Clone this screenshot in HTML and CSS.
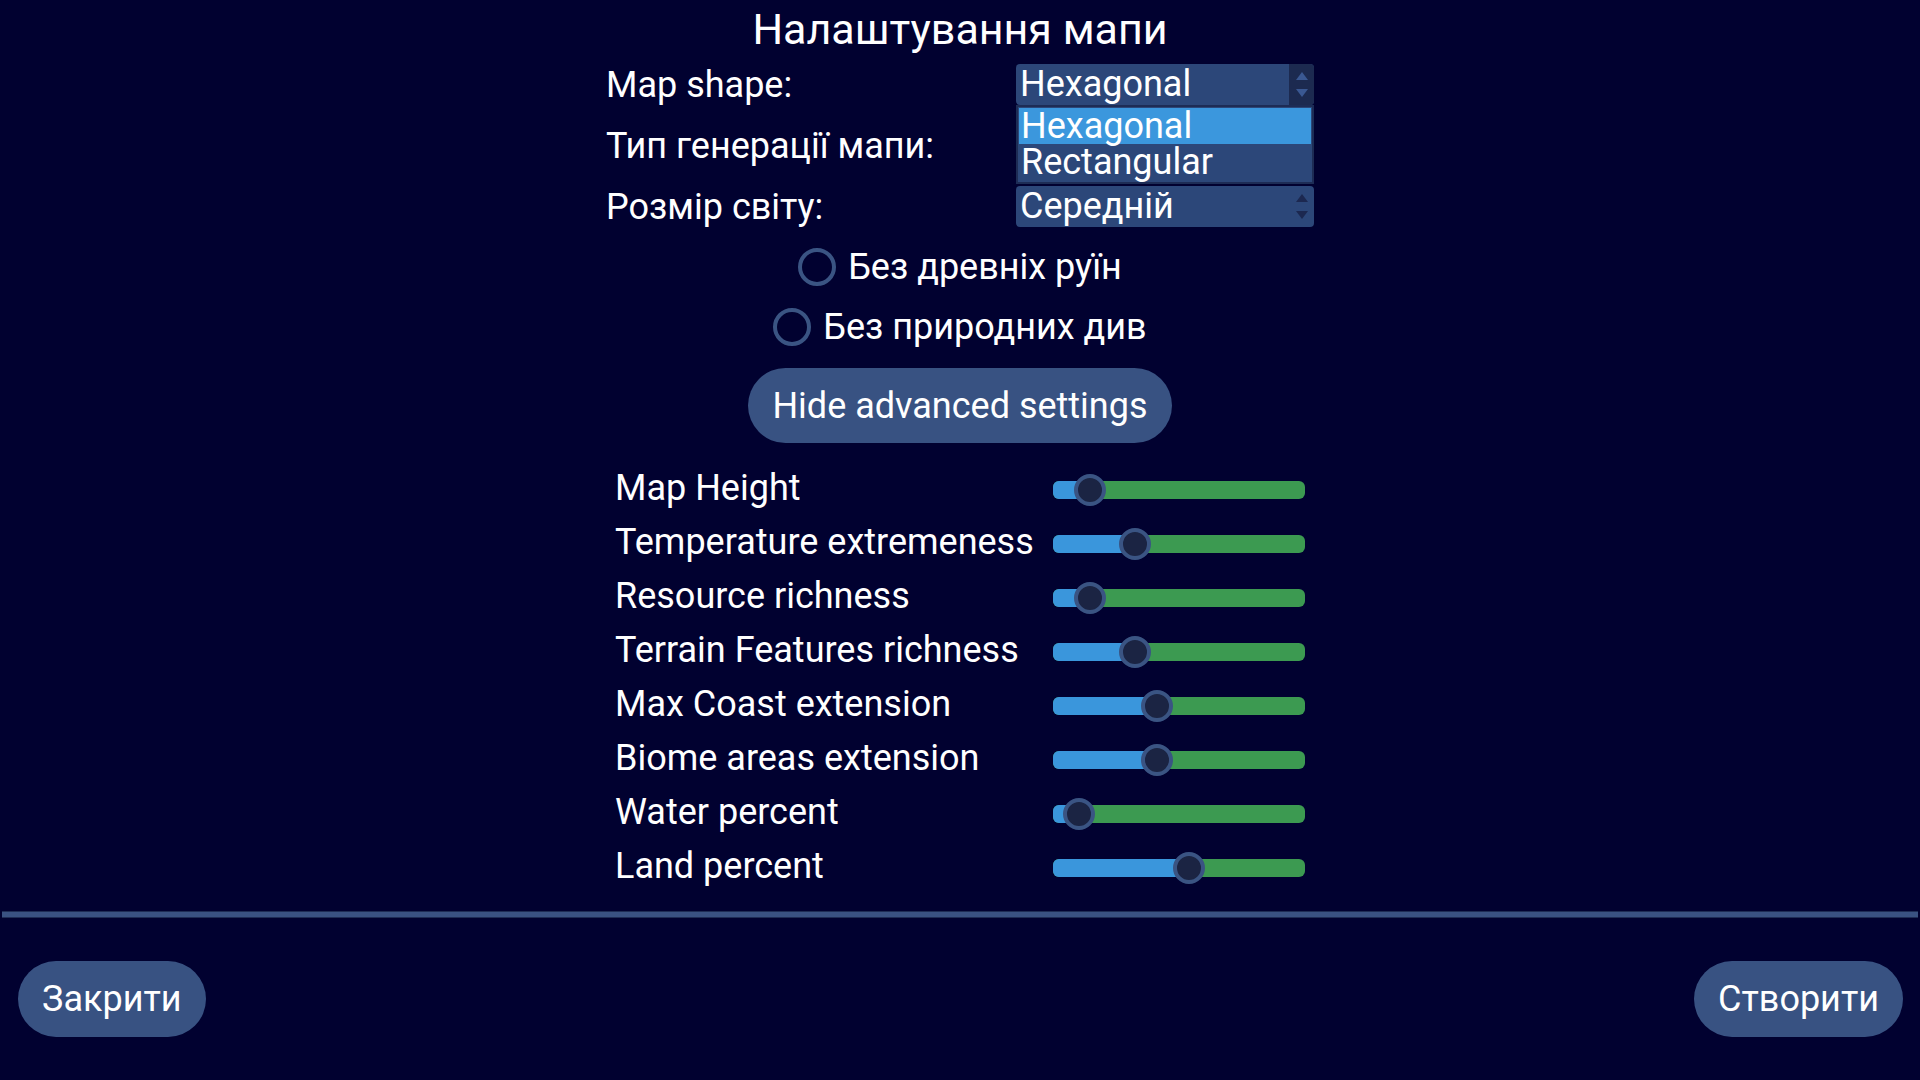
FILE: index.html
```html
<!DOCTYPE html>
<html lang="uk">
<head>
<meta charset="utf-8">
<title>Налаштування мапи</title>
<link rel="stylesheet" href="styles.css">
</head>
<body>
<div class="screen">
  <div class="main">
    <div class="title">Налаштування мапи</div>
    <div class="form">
      <div class="label">Map shape:</div>
      <div class="select open">
        <span class="value">Hexagonal</span>
        <span class="arrows dark"><i class="up"></i><i class="down"></i></span>
        <div class="dropdown">
          <div class="opt selected">Hexagonal</div>
          <div class="opt">Rectangular</div>
        </div>
      </div>
      <div class="label">Тип генерації мапи:</div>
      <div></div>
      <div class="label">Розмір світу:</div>
      <div class="select">
        <span class="value">Середній</span>
        <span class="arrows"><i class="up"></i><i class="down"></i></span>
      </div>
    </div>
    <div class="check"><span class="circle"></span><span>Без древніх руїн</span></div>
    <div class="check"><span class="circle"></span><span>Без природних див</span></div>
    <button class="btn adv">Hide advanced settings</button>
    <div class="sliders">
      <div class="slabel">Map Height</div>
      <div class="track" style="--p:37px"><span class="fill"></span><span class="knob"></span></div>
      <div class="slabel">Temperature extremeness</div>
      <div class="track" style="--p:82px"><span class="fill"></span><span class="knob"></span></div>
      <div class="slabel">Resource richness</div>
      <div class="track" style="--p:37px"><span class="fill"></span><span class="knob"></span></div>
      <div class="slabel">Terrain Features richness</div>
      <div class="track" style="--p:82px"><span class="fill"></span><span class="knob"></span></div>
      <div class="slabel">Max Coast extension</div>
      <div class="track" style="--p:104px"><span class="fill"></span><span class="knob"></span></div>
      <div class="slabel">Biome areas extension</div>
      <div class="track" style="--p:104px"><span class="fill"></span><span class="knob"></span></div>
      <div class="slabel">Water percent</div>
      <div class="track" style="--p:26px"><span class="fill"></span><span class="knob"></span></div>
      <div class="slabel">Land percent</div>
      <div class="track" style="--p:136px"><span class="fill"></span><span class="knob"></span></div>
    </div>
  </div>
  <div class="separator"></div>
  <div class="footer">
    <button class="btn">Закрити</button>
    <button class="btn">Створити</button>
  </div>
</div>
</body>
</html>
```
FILE: styles.css
```css
html, body {
  margin: 0;
  padding: 0;
  background: #010130;
  color: #ffffff;
  font-family: Roboto, "Noto Sans", "Liberation Sans", sans-serif;
}

.screen {
  width: 1920px;
  height: 1080px;
  display: flex;
  flex-direction: column;
  overflow: hidden;
}

.main {
  flex: 1;
  display: flex;
  flex-direction: column;
  align-items: center;
}

.title {
  font-size: 43px;
  line-height: 50px;
  padding-top: 4px;
}

.form {
  display: grid;
  grid-template-columns: 410px 298px;
  grid-auto-rows: 61px;
  align-items: center;
}

.label {
  font-size: 36px;
  line-height: 42px;
  white-space: nowrap;
}

.select {
  position: relative;
  height: 41px;
  background: #2c4779;
  border-radius: 4px;
  display: flex;
  align-items: center;
  font-size: 36px;
}

.select .value {
  flex: 1;
  padding-left: 4px;
  line-height: 41px;
}

.arrows {
  width: 25px;
  height: 100%;
  display: flex;
  flex-direction: column;
  align-items: center;
  justify-content: center;
  gap: 9px;
  border-radius: 0 4px 4px 0;
}

.arrows i {
  width: 0;
  height: 0;
  border-left: 6px solid transparent;
  border-right: 6px solid transparent;
}

.arrows i.up { border-bottom: 8px solid #1c2850; }
.arrows i.down { border-top: 8px solid #1c2850; }

.arrows.dark { background: #1c2a50; }
.arrows.dark i.up { border-bottom-color: #3a5892; }
.arrows.dark i.down { border-top-color: #3a5892; }

.dropdown {
  position: absolute;
  top: 41px;
  left: 0;
  width: 298px;
  height: 79px;
  box-sizing: border-box;
  background: #2c4779;
  border: 2px solid #1d2c55;
  padding: 1px 1px;
  z-index: 2;
}

.opt {
  height: 36px;
  line-height: 36px;
  padding-left: 2px;
  font-size: 36px;
}

.opt.selected {
  background: #3b97dd;
}

.check {
  height: 60px;
  display: flex;
  align-items: center;
  justify-content: center;
  gap: 12px;
  font-size: 36px;
}

.circle {
  width: 38px;
  height: 38px;
  box-sizing: border-box;
  border: 4px solid #3a5483;
  border-radius: 50%;
}

.btn {
  font-family: Roboto, "Noto Sans", "Liberation Sans", sans-serif;
  font-size: 36px;
  color: #ffffff;
  background: #385282;
  border: none;
  height: 76px;
  padding: 0 24px;
  border-radius: 38px;
  white-space: nowrap;
  cursor: pointer;
}

.adv {
  margin-top: 11px;
  height: 75px;
  min-width: 422px;
}

.sliders {
  margin-top: 18px;
  display: grid;
  grid-template-columns: 438px 252px;
  grid-auto-rows: 54px;
  align-items: center;
}

.slabel {
  font-size: 36px;
  line-height: 42px;
  white-space: nowrap;
}

.track {
  position: relative;
  height: 18px;
  margin-top: 4px;
  background: #3c9a51;
  border-radius: 6px;
}

.fill {
  position: absolute;
  left: 0;
  top: 0;
  height: 18px;
  width: var(--p);
  background: #3a96dc;
  border-radius: 6px 0 0 6px;
}

.knob {
  position: absolute;
  top: -7px;
  left: calc(var(--p) - 16px);
  width: 32px;
  height: 32px;
  box-sizing: border-box;
  border: 4px solid #3a5483;
  border-radius: 50%;
  background: #1b2443;
}

.separator {
  height: 5px;
  margin: 0 2px;
  background: #3a5282;
  box-shadow: 0 1px 0 #1f2d55, 0 -1px 0 #1f2d55;
}

.footer {
  height: 163px;
  display: flex;
  align-items: center;
  justify-content: space-between;
  padding: 0 17px 0 18px;
}
```
